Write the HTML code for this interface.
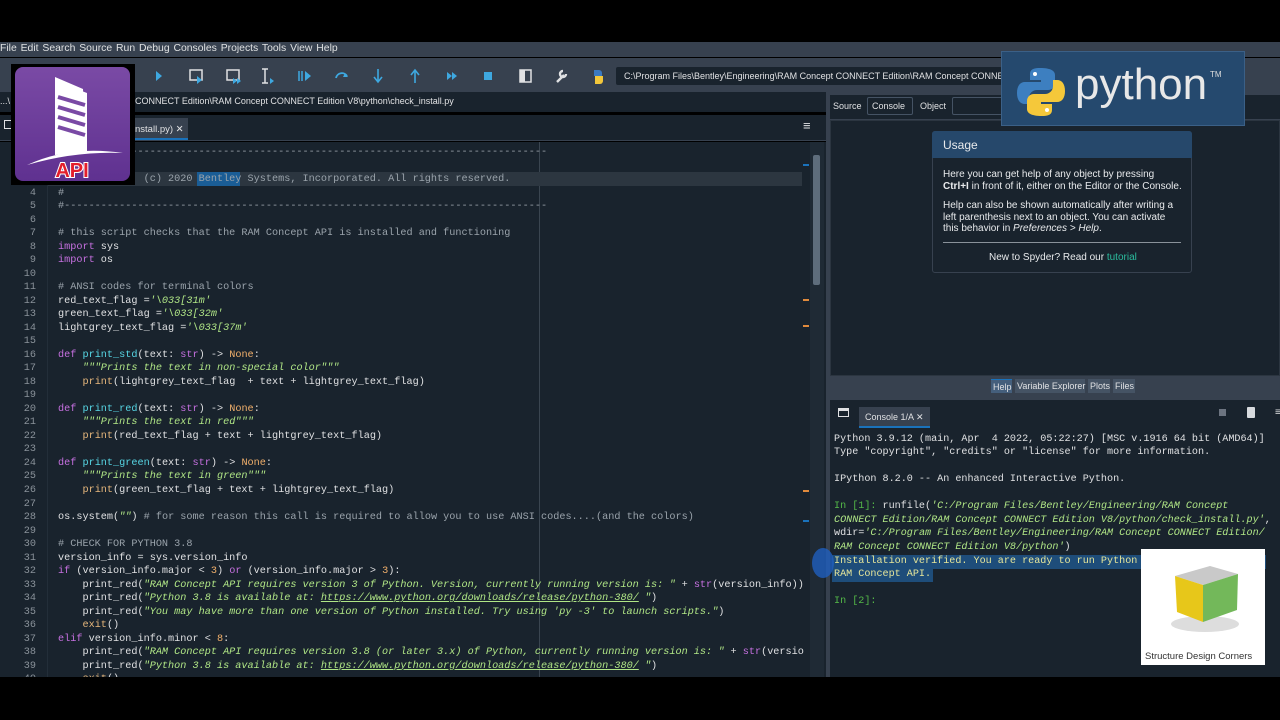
<!DOCTYPE html>
<html><head><meta charset="utf-8">
<style>
*{margin:0;padding:0;box-sizing:border-box}
body{width:1280px;height:720px;background:#000;position:relative;overflow:hidden;font-family:"Liberation Sans",sans-serif;color:#e0e1e3}
.abs{position:absolute}
.ln{position:absolute;left:0;width:36px;text-align:right;font-size:10.2px;color:#8a929a;font-family:"Liberation Mono",monospace;white-space:pre}
.cl{position:absolute;left:58px;font-size:10.2px;color:#e0e1e3;font-family:"Liberation Mono",monospace;white-space:pre}
.c{color:#9aa3ab}.k{color:#c670e0}.f{color:#57d6e4}.s{color:#b0e686;font-style:italic}.n{color:#f2b06b}.b{color:#e6b77c}.u{text-decoration:underline}
.con{position:absolute;left:834px;font-size:10.12px;color:#e0e1e3;font-family:"Liberation Mono",monospace;white-space:pre}
.g{color:#54b948}
.pt{position:absolute;top:379px;height:14px;background:#455364;font-size:9px;padding:2px 0 0 2px;white-space:nowrap}
.ut{position:absolute;left:943px;font-size:10px;line-height:11.5px;color:#e8eaec;white-space:nowrap}
</style></head><body>
<div class="abs" style="left:0;top:42px;width:1280px;height:15px;background:#37414f"></div>
<div class="abs" style="left:0;top:43px;font-size:10.4px;color:#dfe1e2;word-spacing:1px">File Edit Search Source Run Debug Consoles Projects Tools View Help</div>
<div class="abs" style="left:0;top:58px;width:1280px;height:34px;background:#37414f"></div>
<div class="abs" style="left:616px;top:67px;width:386px;height:18px;background:#19232d;border-radius:2px"></div>
<div class="abs" style="left:624px;top:71px;font-size:9px;color:#e0e1e3;white-space:nowrap">C:\Program Files\Bentley\Engineering\RAM Concept CONNECT Edition\RAM Concept CONNECT Ed</div>
<svg class="abs" style="left:140px;top:66px" width="480" height="20">
<path d="M16 5 L22 10 L16 15Z" fill="#3ea8e0"/>
<rect x="50" y="4" width="12" height="10" fill="none" stroke="#e0e1e3" stroke-width="1.5"/><path d="M57 10l5 4-5 4z" fill="#3ea8e0"/>
<rect x="87" y="4" width="12" height="10" fill="none" stroke="#e0e1e3" stroke-width="1.5"/><path d="M93 12l4 3-4 3z M97 12l4 3-4 3z" fill="#3ea8e0"/>
<path d="M125 3v14 M122 3h6 M122 17h6" stroke="#e0e1e3" stroke-width="1.5"/><path d="M130 12l4 3-4 3z" fill="#3ea8e0"/>
<path d="M159 5v10 M162 5v10" stroke="#3ea8e0" stroke-width="1.5"/><path d="M165 5l6 5-6 5z" fill="#3ea8e0"/>
<path d="M196 12a6 6 0 0 1 11-2" stroke="#3ea8e0" stroke-width="1.8" fill="none"/><path d="M205 7l3 4-5 0z" fill="#3ea8e0"/>
<path d="M238 3v12 M234 11l4 5 4-5" stroke="#3ea8e0" stroke-width="1.6" fill="none"/>
<path d="M275 17v-12 M271 9l4-5 4 5" stroke="#3ea8e0" stroke-width="1.6" fill="none"/>
<path d="M307 6l5 4-5 4z M312 6l5 4-5 4z" fill="#3ea8e0"/>
<rect x="344" y="6" width="8" height="8" fill="#3ea8e0"/>
<rect x="380" y="4" width="11" height="12" fill="none" stroke="#e0e1e3" stroke-width="1.5"/><rect x="380" y="4" width="5" height="12" fill="#e0e1e3"/>
<path d="M417 16l7-7 M423 5a3 3 0 1 0 3 3" stroke="#e0e1e3" stroke-width="2.4" fill="none"/>
<path d="M454 4h5a3 3 0 0 1 3 3v3h-8z" fill="#3b79c0"/><path d="M455 10h8v5a3 3 0 0 1-3 3h-5z" fill="#f3c73b"/>
</svg>
<div class="abs" style="left:0;top:92px;width:826px;height:20px;background:#19232d"></div>
<div class="abs" style="left:0;top:96px;font-size:9px;color:#e0e1e3">...\</div>
<div class="abs" style="left:135px;top:96px;font-size:9px;color:#e0e1e3">CONNECT Edition\RAM Concept CONNECT Edition V8\python\check_install.py</div>
<div class="abs" style="left:0;top:115px;width:826px;height:26px;background:#19232d;border-bottom:1px solid #37414f"></div>
<div class="abs" style="left:4px;top:120px;width:9px;height:9px;border:1.5px solid #e0e1e3"></div>
<div class="abs" style="left:120px;top:118px;width:68px;height:22px;background:#37414f;border-bottom:2px solid #1a72bb"></div>
<div class="abs" style="left:135px;top:124px;font-size:9.5px;color:#e0e1e3">nstall.py) ✕</div>
<div class="abs" style="left:803px;top:118px;font-size:13px;color:#e0e1e3">≡</div>
<div class="abs" style="left:0;top:142px;width:826px;height:535px;background:#19232d"></div>
<div class="abs" style="left:0;top:142px;width:48px;height:535px;background:#19232d;border-right:1px solid #232e39"></div>
<div class="abs" style="left:539px;top:142px;width:1px;height:535px;background:#3a4550"></div>
<div class="abs" style="left:48px;top:172px;width:754px;height:14px;background:#2c3640"></div>
<div class="abs" style="left:197px;top:172px;width:43px;height:14px;background:#1a5d96"></div>
<div class="abs" style="left:810px;top:142px;width:14px;height:535px;background:#1f2a35"></div>
<div class="abs" style="left:813px;top:155px;width:7px;height:130px;background:#5e6d7c;border-radius:2px"></div>
<div class="abs" style="left:803px;top:164px;width:6px;height:2px;background:#1a72bb"></div>
<div class="abs" style="left:803px;top:299px;width:6px;height:2px;background:#e08a3c"></div>
<div class="abs" style="left:803px;top:325px;width:6px;height:2px;background:#e08a3c"></div>
<div class="abs" style="left:803px;top:490px;width:6px;height:2px;background:#e08a3c"></div>
<div class="abs" style="left:803px;top:520px;width:6px;height:2px;background:#1a72bb"></div>
<div id="code"></div>
<div class="abs" style="left:826px;top:92px;width:454px;height:585px;background:#37414f"></div>
<div class="abs" style="left:830px;top:95px;width:450px;height:24px;background:#19232d"></div>
<div class="abs" style="left:833px;top:101px;font-size:9px">Source</div>
<div class="abs" style="left:867px;top:97px;width:46px;height:18px;border:1px solid #455364;border-radius:2px;background:#19232d;font-size:9px;padding:3px 0 0 4px">Console</div>
<div class="abs" style="left:920px;top:101px;font-size:9px">Object</div>
<div class="abs" style="left:952px;top:97px;width:60px;height:18px;border:1px solid #455364;border-radius:2px"></div>
<div class="abs" style="left:830px;top:120px;width:450px;height:256px;background:#19232d;border:1px solid #2b3540"></div>
<div class="abs" style="left:932px;top:131px;width:260px;height:142px;background:#19232d;border:1px solid #37414f;border-radius:3px"></div>
<div class="abs" style="left:932px;top:131px;width:260px;height:27px;background:#26486b;border-radius:3px 3px 0 0"></div>
<div class="abs" style="left:943px;top:138px;font-size:12px;color:#e8eaec">Usage</div>
<div class="ut" style="top:169px">Here you can get help of any object by pressing<br><b>Ctrl+I</b> in front of it, either on the Editor or the Console.</div>
<div class="ut" style="top:200px">Help can also be shown automatically after writing a<br>left parenthesis next to an object. You can activate<br>this behavior in <i>Preferences &gt; Help</i>.</div>
<div class="abs" style="left:943px;top:242px;width:238px;height:1px;background:#8a929a"></div>
<div class="abs" style="left:989px;top:252px;font-size:10px;color:#e8eaec">New to Spyder? Read our <span style="color:#2bbd9e">tutorial</span></div>
<div class="pt" style="left:991px;width:21px;background:#455f7c;border-top:1px solid #1a72bb">Help</div>
<div class="pt" style="left:1015px;width:70px">Variable Explorer</div>
<div class="pt" style="left:1088px;width:22px">Plots</div>
<div class="pt" style="left:1113px;width:22px">Files</div>
<div class="abs" style="left:830px;top:400px;width:450px;height:28px;background:#19232d"></div>
<div class="abs" style="left:838px;top:408px;width:11px;height:9px;border:1.5px solid #e0e1e3;border-top-width:3px"></div>
<div class="abs" style="left:859px;top:407px;width:71px;height:21px;background:#37414f;border-bottom:2px solid #1a72bb;font-size:9px;padding:5px 0 0 6px">Console 1/A ✕</div>
<div class="abs" style="left:1219px;top:409px;width:7px;height:7px;background:#6c7480"></div>
<div class="abs" style="left:1247px;top:407px;width:8px;height:11px;background:#d7dade;border-radius:1px"></div>
<div class="abs" style="left:1275px;top:407px;font-size:10px">≡</div>
<div class="abs" style="left:830px;top:428px;width:450px;height:249px;background:#19232d"></div>
<div class="abs" style="left:832px;top:555px;width:434px;height:14px;background:#1e4d7a"></div>
<div class="abs" style="left:832px;top:569px;width:101px;height:13px;background:#1e4d7a"></div>
<div class="abs" style="left:812px;top:548px;width:22px;height:30px;background:#1f5fbf;border-radius:50%;opacity:.8"></div>
<div class="con" style="top:434px">Python 3.9.12 (main, Apr  4 2022, 05:22:27) [MSC v.1916 64 bit (AMD64)]</div>
<div class="con" style="top:447px">Type "copyright", "credits" or "license" for more information.</div>
<div class="con" style="top:474px">IPython 8.2.0 -- An enhanced Interactive Python.</div>
<div class="con" style="top:501px"><span class="g">In [1]:</span> runfile(<span class="s">'C:/Program Files/Bentley/Engineering/RAM Concept</span></div>
<div class="con" style="top:515px"><span class="s">CONNECT Edition/RAM Concept CONNECT Edition V8/python/check_install.py'</span>,</div>
<div class="con" style="top:528px">wdir=<span class="s">'C:/Program Files/Bentley/Engineering/RAM Concept CONNECT Edition/</span></div>
<div class="con" style="top:542px"><span class="s">RAM Concept CONNECT Edition V8/python'</span>)</div>
<div class="con" style="top:556px;color:#e6e69a">Installation verified. You are ready to run Python</div>
<div class="con" style="top:569px;color:#e6e69a">RAM Concept API.</div>
<div class="con" style="top:596px"><span class="g">In [2]:</span></div>
<div class="abs" style="left:1141px;top:549px;width:124px;height:116px;background:#fff"></div>
<svg class="abs" style="left:1160px;top:558px" width="90" height="80">
<ellipse cx="45" cy="66" rx="34" ry="8" fill="#ddd"/>
<path d="M15 18 L50 8 L78 16 L43 27Z" fill="#c9c9c9"/>
<path d="M15 18 L43 27 L43 64 L17 54Z" fill="#e7c71a"/>
<path d="M43 27 L78 16 L77 52 L43 64Z" fill="#73b85a"/>
</svg>
<div class="abs" style="left:1145px;top:651px;font-size:9.5px;color:#333">Structure Design Corners</div>
<div class="abs" style="left:1001px;top:51px;width:244px;height:75px;background:#25496e;border:1px solid #3b6087"></div>
<svg class="abs" style="left:1015px;top:66px" width="52" height="52">
<path d="M25 2c-10 0-10 4-10 7v5h11v2H10c-5 0-8 4-8 11s3 11 8 11h4v-6c0-5 4-8 8-8h11c4 0 7-3 7-7V9c0-4-4-7-15-7z" fill="#3d7fc0"/>
<path d="M27 50c10 0 10-4 10-7v-5H26v-2h16c5 0 8-4 8-11s-3-11-8-11h-4v6c0 5-4 8-8 8H19c-4 0-7 3-7 7v8c0 4 4 7 15 7z" fill="#f5c83a"/>
<circle cx="20" cy="8" r="2" fill="#fff"/><circle cx="32" cy="44" r="2" fill="#fff"/>
</svg>
<div class="abs" style="left:1075px;top:60px;font-size:44px;color:#e8e8e8">python</div>
<div class="abs" style="left:1210px;top:70px;font-size:8px;color:#ddd">TM</div>
<div class="abs" style="left:11px;top:64px;width:124px;height:121px;background:#000"></div>
<div class="abs" style="left:15px;top:67px;width:115px;height:114px;background:linear-gradient(#7a4aa5,#5f3190);border-radius:8px"></div>
<svg class="abs" style="left:15px;top:67px" width="115" height="114">
<path d="M40 10 L68 22 L70 84 L40 88Z" fill="#fff"/>
<path d="M40 14 L72 26 L72 84 L40 88" fill="#fff"/>
<path d="M43 30 L70 38 M43 40 L70 48 M43 50 L70 58 M43 60 L70 68" stroke="#7a4aa5" stroke-width="4"/>
<path d="M12 98 Q55 78 108 86 Q60 84 12 98Z" fill="#fff"/>
<text x="57" y="110" text-anchor="middle" font-family="Liberation Sans" font-weight="bold" font-size="20" fill="#e41e2b" stroke="#fff" stroke-width="2" paint-order="stroke">API</text>
</svg>
<script>
var L={
1:'<span class="c">#-------------------------------------------------------------------------------</span>',
2:'',
3:'<span class="c">#             (c) 2020 Bentley Systems, Incorporated. All rights reserved.</span>',
4:'<span class="c">#</span>',
5:'<span class="c">#-------------------------------------------------------------------------------</span>',
6:'',
7:'<span class="c"># this script checks that the RAM Concept API is installed and functioning</span>',
8:'<span class="k">import</span> sys',
9:'<span class="k">import</span> os',
10:'',
11:'<span class="c"># ANSI codes for terminal colors</span>',
12:'red_text_flag =<span class="s">\'\\033[31m\'</span>',
13:'green_text_flag =<span class="s">\'\\033[32m\'</span>',
14:'lightgrey_text_flag =<span class="s">\'\\033[37m\'</span>',
15:'',
16:'<span class="k">def</span> <span class="f">print_std</span>(text: <span class="k">str</span>) -> <span class="n">None</span>:',
17:'    <span class="s">"""Prints the text in non-special color"""</span>',
18:'    <span class="b">print</span>(lightgrey_text_flag  + text + lightgrey_text_flag)',
19:'',
20:'<span class="k">def</span> <span class="f">print_red</span>(text: <span class="k">str</span>) -> <span class="n">None</span>:',
21:'    <span class="s">"""Prints the text in red"""</span>',
22:'    <span class="b">print</span>(red_text_flag + text + lightgrey_text_flag)',
23:'',
24:'<span class="k">def</span> <span class="f">print_green</span>(text: <span class="k">str</span>) -> <span class="n">None</span>:',
25:'    <span class="s">"""Prints the text in green"""</span>',
26:'    <span class="b">print</span>(green_text_flag + text + lightgrey_text_flag)',
27:'',
28:'os.system(<span class="s">""</span>) <span class="c"># for some reason this call is required to allow you to use ANSI codes....(and the colors)</span>',
29:'',
30:'<span class="c"># CHECK FOR PYTHON 3.8</span>',
31:'version_info = sys.version_info',
32:'<span class="k">if</span> (version_info.major &lt; <span class="n">3</span>) <span class="k">or</span> (version_info.major &gt; <span class="n">3</span>):',
33:'    print_red(<span class="s">"RAM Concept API requires version 3 of Python. Version, currently running version is: "</span> + <span class="k">str</span>(version_info))',
34:'    print_red(<span class="s">"Python 3.8 is available at: <span class="u">https://www.python.org/downloads/release/python-380/</span> "</span>)',
35:'    print_red(<span class="s">"You may have more than one version of Python installed. Try using \'py -3\' to launch scripts."</span>)',
36:'    <span class="b">exit</span>()',
37:'<span class="k">elif</span> version_info.minor &lt; <span class="n">8</span>:',
38:'    print_red(<span class="s">"RAM Concept API requires version 3.8 (or later 3.x) of Python, currently running version is: "</span> + <span class="k">str</span>(versio',
39:'    print_red(<span class="s">"Python 3.8 is available at: <span class="u">https://www.python.org/downloads/release/python-380/</span> "</span>)',
40:'    <span class="b">exit</span>()'};
var h='';
for(var i=1;i<=40;i++){var y=147+(i-1)*13.52;
h+='<div class="ln" style="top:'+y+'px">'+i+'</div><div class="cl" style="top:'+y+'px">'+L[i]+'</div>';}
h+='<div class="abs" style="left:0;top:677px;width:1280px;height:43px;background:#000"></div>';
document.getElementById('code').innerHTML=h;
</script>
</body></html>
